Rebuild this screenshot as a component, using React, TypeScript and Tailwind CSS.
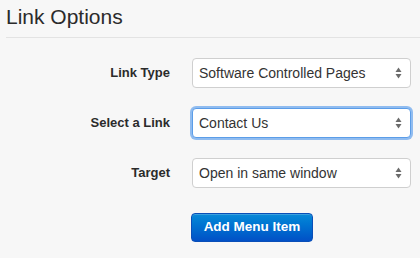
import React from "react";

const Arrows = () => (
  <svg width="7" height="12" viewBox="0 0 7 12" className="shrink-0">
    <path d="M3.5 0.5 L6.5 5 L0.5 5 Z" fill="#6b6b6b" />
    <path d="M3.5 11.5 L6.5 7 L0.5 7 Z" fill="#6b6b6b" />
  </svg>
);

function Row({ label, value, focused }: { label: string; value: string; focused?: boolean }) {
  return (
    <div className="flex items-center gap-[22px] h-[30px]">
      <div className="w-[164px] text-right text-[13px] font-bold text-[#2b2b2b]">{label}</div>
      <div
        className={
          focused
            ? "w-[219px] h-[30px] bg-white rounded-[4px] border border-[#5b9de8] shadow-[0_0_0_2px_rgba(110,168,238,0.75)] flex items-center justify-between pl-[6px] pr-[8px]"
            : "w-[219px] h-[30px] bg-white rounded-[4px] border border-[#cfcfcf] flex items-center justify-between pl-[6px] pr-[8px]"
        }
      >
        <span className="text-[14px] text-[#333]">{value}</span>
        <Arrows />
      </div>
    </div>
  );
}

export default function App() {
  return (
    <div
      className="w-[420px] h-[258px] bg-[#f7f7f7] pl-[6px] overflow-hidden"
      style={{ fontFamily: '"Liberation Sans", Arial, sans-serif' }}
    >
      <h1 className="pt-[4px] text-[21px] leading-[26px] text-[#2b2b2b] font-normal">Link Options</h1>
      <div className="mt-[7px] h-px bg-[#e3e3e3]" />
      <div className="mt-[20px] flex flex-col gap-[20px]">
        <Row label="Link Type" value="Software Controlled Pages" />
        <Row label="Select a Link" value="Contact Us" focused />
        <Row label="Target" value="Open in same window" />
      </div>
      <div className="mt-[25px] flex">
        <div className="w-[185px]" />
        <button className="w-[122px] h-[29px] rounded-[4px] border border-[#0a4fb8] bg-gradient-to-b from-[#0a8ad8] to-[#0350c6] text-white text-[13.5px] font-bold shadow-[inset_0_1px_0_rgba(255,255,255,0.2)]">
          Add Menu Item
        </button>
      </div>
    </div>
  );
}
